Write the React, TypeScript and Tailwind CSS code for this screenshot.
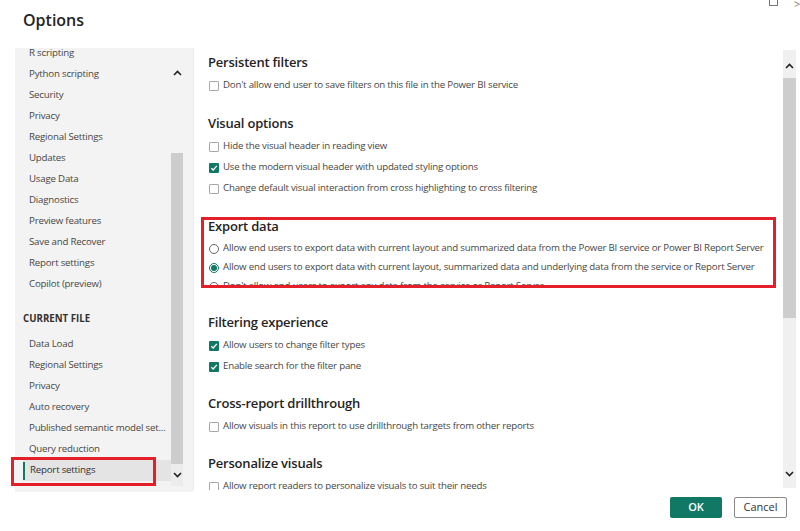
import React from 'react';

const globalItems = [
  'R scripting',
  'Python scripting',
  'Security',
  'Privacy',
  'Regional Settings',
  'Updates',
  'Usage Data',
  'Diagnostics',
  'Preview features',
  'Save and Recover',
  'Report settings',
  'Copilot (preview)',
];

const fileItems = [
  'Data Load',
  'Regional Settings',
  'Privacy',
  'Auto recovery',
  'Published semantic model set...',
  'Query reduction',
];

function Chevron({ up }: { up?: boolean }) {
  return (
    <svg width="9" height="6" viewBox="0 0 9 6" className="block">
      <path
        d={up ? 'M1 5 L4.5 1.5 L8 5' : 'M1 1 L4.5 4.5 L8 1'}
        fill="none"
        stroke="#222"
        strokeWidth="1.6"
      />
    </svg>
  );
}

function Checkbox({ checked }: { checked?: boolean }) {
  if (checked) {
    return (
      <span className="w-[10px] h-[10px] rounded-[1px] bg-[#117865] flex items-center justify-center shrink-0">
        <svg width="8" height="8" viewBox="0 0 8 8">
          <path d="M1.3 4.2 L3.2 6 L6.8 1.8" fill="none" stroke="white" strokeWidth="1.3" />
        </svg>
      </span>
    );
  }
  return <span className="w-[10px] h-[10px] rounded-[1px] border border-[#a8a8a8] bg-white shrink-0" />;
}

function Radio({ checked }: { checked?: boolean }) {
  return (
    <span
      className={`w-[10px] h-[10px] rounded-full border shrink-0 flex items-center justify-center bg-white ${
        checked ? 'border-[#117865]' : 'border-[#666]'
      }`}
    >
      {checked && <span className="w-[6px] h-[6px] rounded-full bg-[#117865]" />}
    </span>
  );
}

function CheckRow({ label, checked }: { label: string; checked?: boolean }) {
  return (
    <div className="h-[21px] flex items-center gap-[4px] pl-[1px]">
      <Checkbox checked={checked} />
      <span className="text-[9.7px] tracking-[-0.2px] text-[#484644] whitespace-nowrap">{label}</span>
    </div>
  );
}

function RadioRow({ label, checked }: { label: string; checked?: boolean }) {
  return (
    <div className="h-[19px] flex items-center gap-[4px] pl-[1px]">
      <Radio checked={checked} />
      <span className="text-[9.7px] tracking-[-0.2px] text-[#484644] whitespace-nowrap">{label}</span>
    </div>
  );
}

function Heading({ children }: { children: React.ReactNode }) {
  return (
    <div className="h-[20px] mb-[2px] flex items-center text-[13px] tracking-[-0.2px] font-semibold text-[#252423]">
      {children}
    </div>
  );
}

function NavItem({ name }: { name: string }) {
  return (
    <div className="h-[21px] flex items-center pl-[14px] text-[9.7px] tracking-[-0.2px] text-[#484644] whitespace-nowrap">
      {name}
    </div>
  );
}

export default function App() {
  return (
    <div className="w-[800px] h-[531px] bg-white relative overflow-hidden font-['Open_Sans',sans-serif]">
      {/* window controls (cut off) */}
      <div className="absolute left-[769px] top-[-3px] w-[9px] h-[9px] border border-[#777]" />
      <div className="absolute left-[794px] top-[-4px] text-[11px] text-[#777]">&gt;</div>

      {/* Title */}
      <div className="h-[48px] pl-[23px] pt-[8px]">
        <span className="text-[16px] font-semibold text-[#252423]">Options</span>
      </div>

      <div className="flex h-[444px]">
        {/* --- Left nav --- */}
        <aside className="relative ml-[15px] w-[178px] bg-[#f3f3f3] flex">
          <div className="flex-1 overflow-hidden">
            <div className="mt-[-5px]">
              {globalItems.map((name) => (
                <NavItem key={name} name={name} />
              ))}
              <div className="h-[21px] mt-[14px] flex items-center pl-[8px] text-[9.7px] font-bold text-[#323130]">
                CURRENT FILE
              </div>
              <div className="mt-[4px]">
                {fileItems.map((name) => (
                  <NavItem key={name} name={name} />
                ))}
                {/* selected item */}
                <div className="h-[21px] ml-[8px] flex items-center bg-[#e4e4e4]">
                  <span className="w-[2px] h-[18px] bg-[#117865]" />
                  <span className="pl-[5px] text-[9.7px] tracking-[-0.2px] text-[#323130]">Report settings</span>
                </div>
              </div>
            </div>
          </div>
          {/* annotation around the selected item */}
          <div className="absolute left-[-4px] top-[409px] w-[145px] h-[29px] border-[3px] border-[#e3202a]" />
          {/* scrollbar */}
          <div className="w-[12px] mr-[10px] flex flex-col">
            <div className="h-[46px] flex items-center justify-center pt-[3px]">
              <Chevron up />
            </div>
            <div className="h-[59px]" />
            <div className="h-[311px] bg-[#cdcdcd]" />
            <div className="h-[22px] bg-[#ececec] flex items-center justify-center">
              <Chevron />
            </div>
          </div>
        </aside>

        {/* --- Right content --- */}
        <main className="flex-1 h-[442px] flex border-l border-[#ececec]">
          <div className="flex-1 overflow-hidden pl-[14px] pt-[5px]">
            <Heading>Persistent filters</Heading>
            <CheckRow label="Don't allow end user to save filters on this file in the Power BI service" />

            <div className="mt-[18px]">
              <Heading>Visual options</Heading>
              <CheckRow label="Hide the visual header in reading view" />
              <CheckRow label="Use the modern visual header with updated styling options" checked />
              <CheckRow label="Change default visual interaction from cross highlighting to cross filtering" />
            </div>

            <div className="mt-[18px] ml-[-7px] w-[575px] h-[71px] border-[3px] border-[#e3202a] pl-[4px] overflow-hidden">
              <div className="h-[16px] mt-[-1px] flex items-center text-[13px] tracking-[-0.2px] font-semibold text-[#252423]">
                Export data
              </div>
              <div className="mt-[4px]">
                <RadioRow label="Allow end users to export data with current layout and summarized data from the Power BI service or Power BI Report Server" />
                <RadioRow
                  label="Allow end users to export data with current layout, summarized data and underlying data from the service or Report Server"
                  checked
                />
                <RadioRow label="Don't allow end users to export any data from the service or Report Server" />
              </div>
            </div>

            <div className="mt-[25px]">
              <Heading>Filtering experience</Heading>
              <CheckRow label="Allow users to change filter types" checked />
              <CheckRow label="Enable search for the filter pane" checked />
            </div>

            <div className="mt-[17px]">
              <Heading>Cross-report drillthrough</Heading>
              <CheckRow label="Allow visuals in this report to use drillthrough targets from other reports" />
            </div>

            <div className="mt-[17px]">
              <Heading>Personalize visuals</Heading>
              <CheckRow label="Allow report readers to personalize visuals to suit their needs" />
            </div>
          </div>

          {/* scrollbar */}
          <div className="w-[13px] mr-[4px] mt-[2px] mb-[2px] bg-[#f0f0f0] flex flex-col">
            <div className="h-[28px] flex items-center justify-center pt-[4px]">
              <Chevron up />
            </div>
            <div className="h-[240px] bg-[#cdcdcd]" />
            <div className="flex-1" />
            <div className="h-[28px] flex items-center justify-center">
              <Chevron />
            </div>
          </div>
        </main>
      </div>

      {/* Buttons */}
      <div className="flex justify-end gap-[12px] pr-[13px] pt-[5px]">
        <button className="w-[52px] h-[21px] rounded-[2px] bg-[#117865] text-white text-[11px] font-semibold">OK</button>
        <button className="w-[53px] h-[21px] rounded-[2px] border border-[#8a8886] bg-white text-[#323130] text-[11px]">
          Cancel
        </button>
      </div>
    </div>
  );
}
